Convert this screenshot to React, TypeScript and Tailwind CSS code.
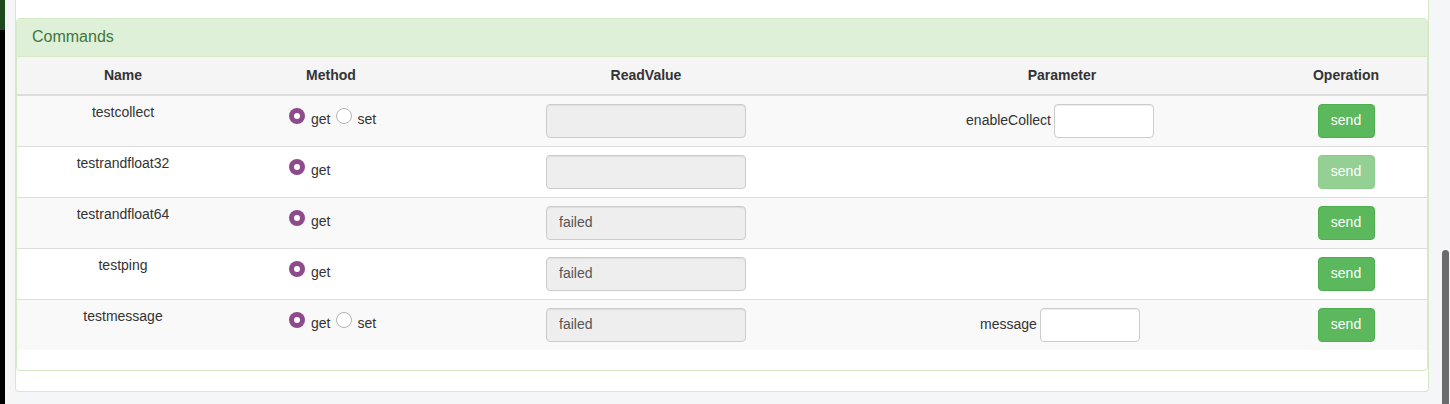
import React from 'react'

interface Command {
  name: string
  canSet: boolean
  readValue: string
  param?: string
  disabled?: boolean
}

const commands: Command[] = [
  { name: 'testcollect', canSet: true, readValue: '', param: 'enableCollect' },
  { name: 'testrandfloat32', canSet: false, readValue: '', disabled: true },
  { name: 'testrandfloat64', canSet: false, readValue: 'failed' },
  { name: 'testping', canSet: false, readValue: 'failed' },
  { name: 'testmessage', canSet: true, readValue: 'failed', param: 'message' },
]

function Radio({ checked }: { checked: boolean }) {
  if (checked) {
    return (
      <span className="flex h-[16px] w-[16px] shrink-0 items-center justify-center rounded-full bg-[#8d4b8b]">
        <span className="h-[6px] w-[6px] rounded-full bg-white" />
      </span>
    )
  }
  return <span className="block h-[16px] w-[16px] shrink-0 rounded-full border border-[#b5b5b5] bg-white" />
}

function CommandRow({ cmd, odd }: { cmd: Command; odd: boolean }) {
  return (
    <tr className={odd ? 'bg-[#f9f9f9]' : 'bg-white'}>
      <td className="border-t border-[#dddddd] px-2 pt-[6px] pb-2 text-center align-top leading-[20px]">
        {cmd.name}
      </td>
      <td className="border-t border-[#dddddd] py-2 pl-[60px] align-top">
        <div className="mt-[4px] flex items-start">
          <Radio checked />
          <span className="ml-[6px] mt-[1px] leading-[20px]">get</span>
          {cmd.canSet && (
            <>
              <span className="ml-[6px] block">
                <Radio checked={false} />
              </span>
              <span className="ml-[5px] mt-[1px] leading-[20px]">set</span>
            </>
          )}
        </div>
      </td>
      <td className="border-t border-[#dddddd] py-2 align-top">
        <div className="flex justify-center">
          <div className="flex h-[34px] w-[200px] items-center rounded-[4px] border border-[#cccccc] bg-[#eeeeee] px-3 pb-[2px] text-[#555555] shadow-[inset_0_1px_1px_rgba(0,0,0,0.075)]">
            {cmd.readValue}
          </div>
        </div>
      </td>
      <td className="border-t border-[#dddddd] py-2 pr-[4px] align-top">
        {cmd.param && (
          <div className="flex items-center justify-center gap-[3px]">
            <span className="mb-[3px] leading-[20px]">{cmd.param}</span>
            <div className="h-[34px] w-[100px] rounded-[4px] border border-[#cccccc] bg-white shadow-[inset_0_1px_1px_rgba(0,0,0,0.075)]" />
          </div>
        )}
      </td>
      <td className="border-t border-[#dddddd] py-2 align-top">
        <div className="flex justify-center">
          <button
            className={
              'h-[34px] w-[57px] rounded-[4px] border border-[#4cae4c] bg-[#5cb85c] pb-[2px] text-white ' +
              (cmd.disabled ? 'opacity-65' : '')
            }
          >
            send
          </button>
        </div>
      </td>
    </tr>
  )
}

export default function App() {
  return (
    <div
      className="flex h-[404px] w-[1450px] overflow-hidden bg-[#f5f6f8] text-[14px] text-[#333333]"
      style={{ fontFamily: '"Liberation Sans", Helvetica, Arial, sans-serif' }}
    >
      {/* side strip */}
      <div className="flex w-[5px] flex-col bg-black">
        <div className="h-[30px] bg-[#1d4a1d]" />
      </div>

      {/* outer card */}
      <div className="ml-[10px] h-[392px] w-[1414px] rounded-b-[4px] border-x border-b border-[#d6e9c6] bg-white pt-[18px]">
        <div className="rounded-[4px] border border-[#d6e9c6] bg-white">
          <div className="rounded-t-[3px] border-b border-[#d6e9c6] bg-[#dff0d8] px-[15px] pt-[9px] pb-[11px]">
            <h3 className="text-[16px] leading-[17px] text-[#3c763d]">Commands</h3>
          </div>

          <table className="mb-[20px] w-full table-fixed border-collapse">
            <colgroup>
              <col className="w-[212px]" />
              <col className="w-[204px]" />
              <col className="w-[426px]" />
              <col className="w-[406px]" />
              <col />
            </colgroup>
            <thead>
              <tr className="bg-[#f5f5f5]">
                {['Name', 'Method', 'ReadValue', 'Parameter', 'Operation'].map((h) => (
                  <th key={h} className="border-b-2 border-[#dddddd] px-2 pt-2 pb-[9px] text-center font-bold leading-[20px]">
                    {h}
                  </th>
                ))}
              </tr>
            </thead>
            <tbody>
              {commands.map((cmd, i) => (
                <CommandRow key={cmd.name} cmd={cmd} odd={i % 2 === 0} />
              ))}
            </tbody>
          </table>
        </div>
      </div>

      {/* scrollbar */}
      <div className="ml-[13px] flex flex-col pt-[250px]">
        <div className="h-full w-[7px] rounded-t-[4px] bg-[#6b6b6b]" />
      </div>
    </div>
  )
}
